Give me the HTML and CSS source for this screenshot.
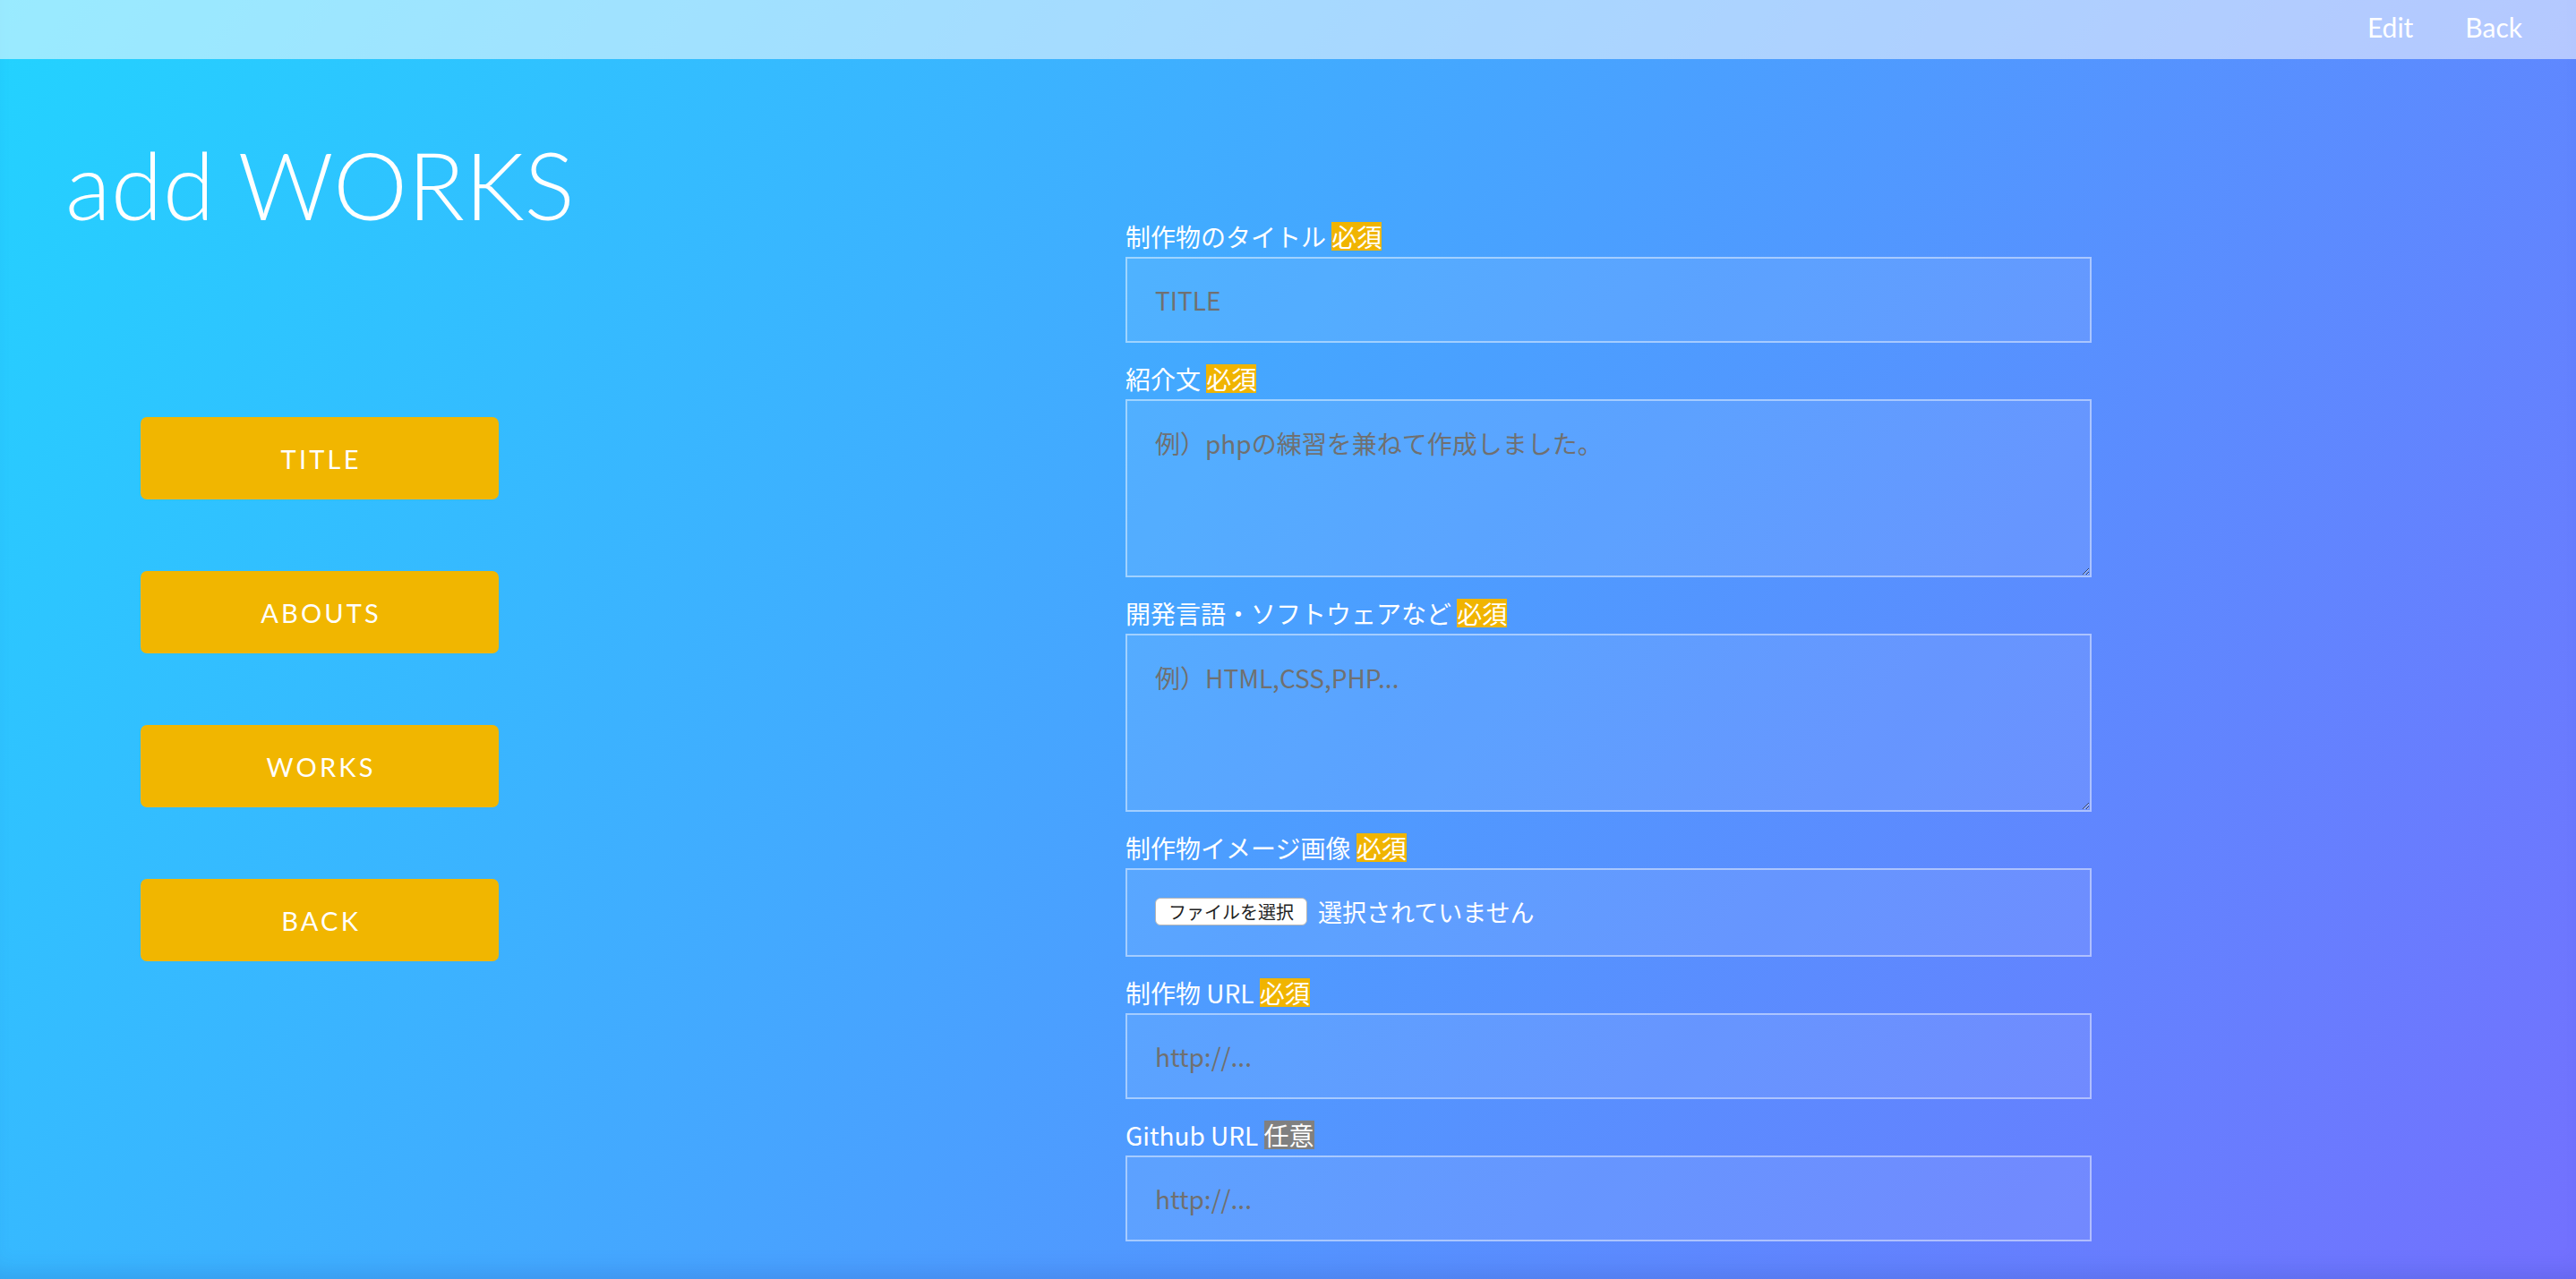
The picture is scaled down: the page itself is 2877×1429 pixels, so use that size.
FILE: index.html
```html
<!DOCTYPE html>
<html lang="ja">
<head>
    <meta charset="UTF-8">
    <meta name="viewport" content="width=device-width, initial-scale=1.0">
    <title>add WORKS</title>
    <link rel="stylesheet" href="styles.css">
</head>
<body>
    <header class="header">
        <nav class="header-nav">
            <a href="#">Edit</a>
            <a href="#">Back</a>
        </nav>
    </header>

    <main class="container">
        <div class="side">
            <h1 class="page-title">add WORKS</h1>
            <ul class="menu">
                <li><a href="#" class="menu-btn">TITLE</a></li>
                <li><a href="#" class="menu-btn">ABOUTS</a></li>
                <li><a href="#" class="menu-btn">WORKS</a></li>
                <li><a href="#" class="menu-btn">BACK</a></li>
            </ul>
        </div>

        <form class="work-form">
            <div class="form-group">
                <label class="form-label">制作物のタイトル <span class="badge">必須</span></label>
                <input type="text" class="form-input" placeholder="TITLE">
            </div>
            <div class="form-group">
                <label class="form-label">紹介文 <span class="badge">必須</span></label>
                <textarea class="form-textarea" placeholder="例）phpの練習を兼ねて作成しました。"></textarea>
            </div>
            <div class="form-group">
                <label class="form-label">開発言語・ソフトウェアなど <span class="badge">必須</span></label>
                <textarea class="form-textarea" placeholder="例）HTML,CSS,PHP..."></textarea>
            </div>
            <div class="form-group">
                <label class="form-label">制作物イメージ画像 <span class="badge">必須</span></label>
                <div class="file-box">
                    <label class="file-btn">ファイルを選択<input type="file" class="hidden"></label>
                    <span class="file-name">選択されていません</span>
                </div>
            </div>
            <div class="form-group">
                <label class="form-label">制作物 URL <span class="badge">必須</span></label>
                <input type="text" class="form-input" placeholder="http://...">
            </div>
            <div class="form-group">
                <label class="form-label">Github URL <span class="badge badge-optional">任意</span></label>
                <input type="text" class="form-input" placeholder="http://...">
            </div>
        </form>
    </main>
</body>
</html>
```

FILE: styles.css
```css
html, body {
    margin: 0;
    padding: 0;
}
body {
    min-height: 1429px;
    font-family: 'Lato', 'Noto Sans CJK JP', sans-serif;
    color: #fff;
    background: linear-gradient(125deg, #22d3ff 0%, #4aa0ff 50%, #7370fe 100%);
    overflow: hidden;
    box-shadow: inset 0 -22px 24px -14px rgba(40, 60, 160, 0.18);
}
a {
    color: #fff;
    text-decoration: none;
}
.hidden {
    display: none;
}
.header {
    height: 66px;
    background-color: rgba(255, 255, 255, 0.54);
    display: flex;
    justify-content: flex-end;
    align-items: center;
}
.header-nav {
    display: flex;
    gap: 58px;
    padding-right: 60px;
    padding-bottom: 6px;
}
.header-nav a {
    font-size: 30px;
    font-weight: 400;
}
.container {
    display: flex;
}
.side {
    width: 1257px;
    flex-shrink: 0;
}
.page-title {
    margin: 76px 0 0 73px;
    font-size: 105px;
    line-height: 126px;
    font-weight: 300;
}
.menu {
    list-style: none;
    margin: 198px 0 0 157px;
    padding: 0;
    display: flex;
    flex-direction: column;
    gap: 80px;
}
.menu-btn {
    display: flex;
    align-items: center;
    justify-content: center;
    width: 400px;
    height: 92px;
    background-color: #f1b600;
    border-radius: 7px;
    font-size: 29px;
    letter-spacing: 0.11em;
    text-indent: 0.11em;
}
.work-form {
    width: 1079px;
    padding-top: 182px;
    font-family: 'Noto Sans CJK JP', sans-serif;
}
.form-group {
    margin-bottom: 24px;
}
.form-label {
    display: block;
    font-size: 28px;
    line-height: 32px;
    margin-bottom: 7px;
}
.badge {
    display: inline-block;
    background-color: #f0b400;
    line-height: 32px;
}
.badge-optional {
    background-color: #808080;
}
.form-input,
.form-textarea,
.file-box {
    display: block;
    box-sizing: border-box;
    width: 100%;
    margin: 0;
    border: 2px solid rgba(255, 255, 255, 0.45);
    border-radius: 0;
    background-color: rgba(255, 255, 255, 0.08);
    color: #fff;
    font-family: 'Noto Sans CJK JP', sans-serif;
    font-size: 28px;
    padding: 0 31px;
    outline: none;
}
.form-input {
    height: 96px;
}
.form-textarea {
    height: 199px;
    padding-top: 27px;
    line-height: 40px;
}
.form-input::placeholder,
.form-textarea::placeholder {
    color: #707070;
}
.file-box {
    height: 99px;
    display: flex;
    align-items: center;
    gap: 12px;
    padding-bottom: 2px;
}
.file-btn {
    display: flex;
    align-items: center;
    box-sizing: border-box;
    height: 31px;
    padding: 0 14px;
    background-color: #fff;
    color: #222;
    border: 1px solid #b5b5b5;
    border-radius: 6px;
    font-size: 20px;
}
.file-name {
    font-size: 27px;
}
```
